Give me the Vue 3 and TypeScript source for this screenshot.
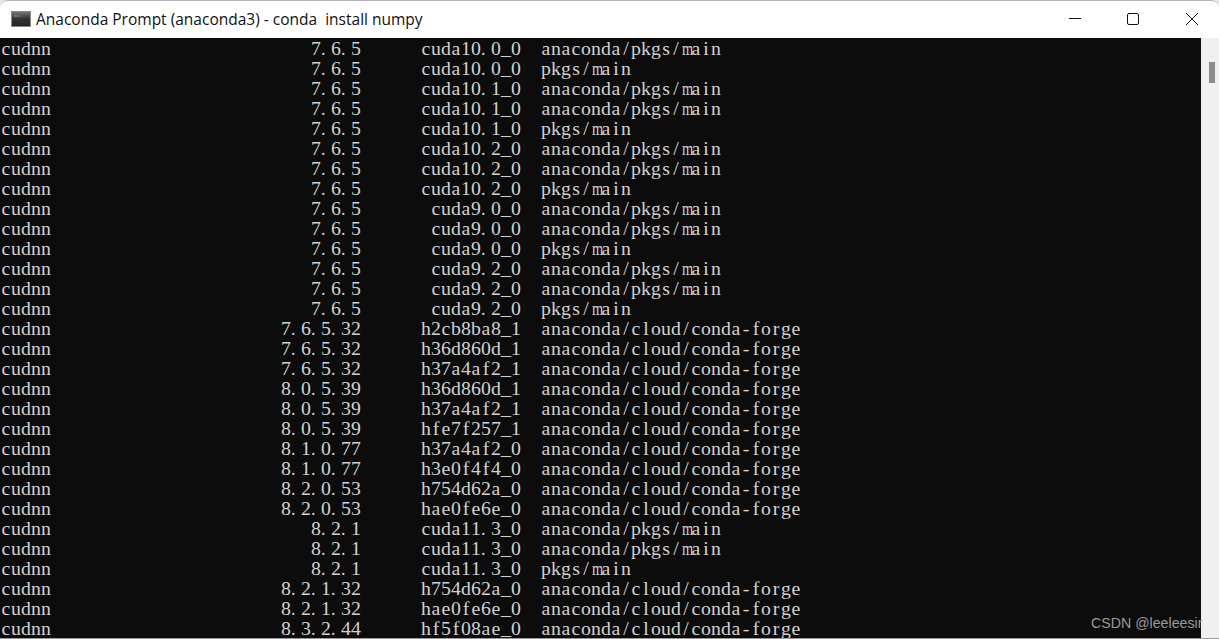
<script setup lang="ts">
type Row = [string, string, string];
const m = "anaconda/pkgs/main";
const p = "pkgs/main";
const f = "anaconda/cloud/conda-forge";
const data: Row[] = [
  ["7.6.5", "cuda10.0_0", m],
  ["7.6.5", "cuda10.0_0", p],
  ["7.6.5", "cuda10.1_0", m],
  ["7.6.5", "cuda10.1_0", m],
  ["7.6.5", "cuda10.1_0", p],
  ["7.6.5", "cuda10.2_0", m],
  ["7.6.5", "cuda10.2_0", m],
  ["7.6.5", "cuda10.2_0", p],
  ["7.6.5", "cuda9.0_0", m],
  ["7.6.5", "cuda9.0_0", m],
  ["7.6.5", "cuda9.0_0", p],
  ["7.6.5", "cuda9.2_0", m],
  ["7.6.5", "cuda9.2_0", m],
  ["7.6.5", "cuda9.2_0", p],
  ["7.6.5.32", "h2cb8ba8_1", f],
  ["7.6.5.32", "h36d860d_1", f],
  ["7.6.5.32", "h37a4af2_1", f],
  ["8.0.5.39", "h36d860d_1", f],
  ["8.0.5.39", "h37a4af2_1", f],
  ["8.0.5.39", "hfe7f257_1", f],
  ["8.1.0.77", "h37a4af2_0", f],
  ["8.1.0.77", "h3e0f4f4_0", f],
  ["8.2.0.53", "h754d62a_0", f],
  ["8.2.0.53", "hae0fe6e_0", f],
  ["8.2.1", "cuda11.3_0", m],
  ["8.2.1", "cuda11.3_0", m],
  ["8.2.1", "cuda11.3_0", p],
  ["8.2.1.32", "h754d62a_0", f],
  ["8.2.1.32", "hae0fe6e_0", f],
  ["8.3.2.44", "hf5f08ae_0", f],
];
const lines = data.map(([v, b, c]) =>
  ("cudnn".padEnd(36 - v.length) + v + b.padStart(16) + "  " + c).split("")
);
function cellClass(ch: string): string {
  if (ch === "m") return "cell wide";
  if (ch === ".") return "cell dot";
  return "cell";
}
</script>

<template>
  <div class="window">
    <header class="titlebar">
      <div class="title-left">
        <svg class="app-icon" width="20" height="16" viewBox="0 0 20 16">
          <defs>
            <linearGradient id="ico" x1="0" y1="0" x2="0" y2="1">
              <stop offset="0" stop-color="#777" />
              <stop offset="0.5" stop-color="#333" />
              <stop offset="1" stop-color="#222" />
            </linearGradient>
          </defs>
          <rect x="0.5" y="0.5" width="19" height="15" fill="url(#ico)" stroke="#888" stroke-width="1" />
          <path d="M3 5h3M7 5h2" stroke="#999" stroke-width="1" />
        </svg>
        <span class="title">Anaconda Prompt (anaconda3) - conda&nbsp; install numpy</span>
      </div>
      <div class="controls">
        <svg width="12" height="12" viewBox="0 0 12 12"><path d="M0 5.5h12" stroke="#111" fill="none" /></svg>
        <svg width="12" height="12" viewBox="0 0 12 12"><rect x="0.5" y="0.5" width="11" height="11" rx="1.5" stroke="#111" fill="none" /></svg>
        <svg width="12" height="12" viewBox="0 0 12 12"><path d="M0 0l12 12M12 0L0 12" stroke="#111" fill="none" /></svg>
      </div>
    </header>
    <main class="body">
      <pre class="console"><div v-for="(l, i) in lines" :key="i" class="line"><span v-for="(ch, j) in l" :key="j" :class="cellClass(ch)">{{ ch }}</span></div></pre>
      <aside class="scrollbar"><div class="thumb"></div></aside>
    </main>
    <span class="watermark">CSDN @leeleesir</span>
  </div>
</template>

<style>
html, body { margin: 0; background: #e8e8e8; }
</style>

<style scoped>
.window {
  position: relative;
  width: 1219px;
  height: 639px;
  box-sizing: border-box;
  display: flex;
  flex-direction: column;
  overflow: hidden;
  background: #fff;
  border-top: 1px solid #b4b4b4;
  border-bottom: 1px solid #9a9a9a;
  border-radius: 8px 8px 0 0;
}
.titlebar {
  height: 37px;
  flex: none;
  display: flex;
  align-items: center;
  justify-content: space-between;
  padding: 0 21px 1px 11px;
  box-sizing: border-box;
  background: #fff;
}
.title-left { display: flex; align-items: center; gap: 5px; }
.app-icon { flex: none; }
.title {
  font-family: "Open Sans", "Noto Sans", sans-serif;
  font-size: 15.5px;
  color: #111;
  white-space: nowrap;
}
.controls { display: flex; align-items: center; gap: 46px; }
.controls svg { display: block; }
.controls svg:last-child { margin-left: 1px; }
.body { flex: 1; min-height: 0; display: flex; background: #0c0c0c; }
.console {
  flex: 1;
  margin: 0;
  padding: 1px 0 0 0;
  overflow: hidden;
  font-family: "Liberation Serif", serif;
  font-size: 18px;
  line-height: 20px;
  color: #d2d2d2;
  white-space: pre;
}
.line { height: 20px; padding-left: 1px; }
.cell { display: inline-block; width: 10px; text-align: center; transform: scaleX(1.1); }
.wide { transform: scaleX(0.8); }
.dot { text-align: left; transform: none; }
.scrollbar {
  width: 18px;
  flex: none;
  background: #f0f0f0;
  padding: 24px 4px 0 8px;
  box-sizing: border-box;
}
.thumb { height: 21px; background: #8c8c8c; }
.watermark {
  position: absolute;
  left: 1091px;
  top: 614px;
  font-family: "Liberation Sans", sans-serif;
  font-size: 14.2px;
  line-height: 16px;
  color: #9a9a9a;
  white-space: nowrap;
}
</style>
